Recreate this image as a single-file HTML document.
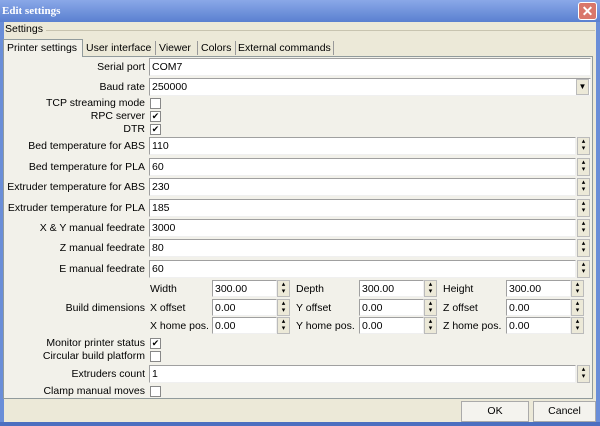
<!DOCTYPE html><html><head><style>
body{margin:0;width:600px;height:426px;overflow:hidden;background:#ece9d8;font-family:"Liberation Sans",sans-serif;font-size:10.5px;color:#000;position:relative}
div,span{position:absolute;box-sizing:border-box;white-space:nowrap}
.t{background:linear-gradient(#8aa8e8,#5a80d0);left:0;top:0;width:600px;height:22px;color:#fff;font-family:"Liberation Serif",serif;font-weight:bold;font-size:11px;padding:5px 0 0 2px}
.x{left:578px;top:2px;width:19px;height:18px;background:#d9776b;border:1px solid #fff;border-radius:3px;color:#fff;font-size:14px;text-align:center;line-height:16px;font-weight:bold}
.l{text-align:right;width:145px;left:0}
.f{background:#fff;border:1px solid #7f9db9;border-color:#a0a0a0 #f0f0f0 #f0f0f0 #a0a0a0;padding:1px 2px;height:18px;line-height:14px}
.s{width:13px;height:18px;background:#ece9d8;border:1px solid #bbb;font-size:7px;line-height:7px;text-align:center}
.c{width:11px;height:11px;background:#fff;border:1px solid #888;font-size:9px;line-height:9px;text-align:center}
.b{height:21px;border:1px solid #aaa;background:#f4f3ee;text-align:center;line-height:19px}
</style></head><body>
<div class="t">Edit settings</div><div class="x">✕</div>
<div style="left:0;top:22px;width:4px;height:404px;background:#6a8ed8"></div>
<div style="left:596px;top:22px;width:4px;height:404px;background:#6a8ed8"></div>
<div style="left:0;top:422px;width:600px;height:4px;background:#4c6fc0"></div>
<div style="left:5px;top:23px">Settings</div>
<div style="left:46px;top:30px;width:549px;height:1px;background:#c8c4b0"></div>
<div style="left:3px;top:56px;width:590px;height:343px;border:1px solid #919b9c;background:#f2f1ea"></div>
<div style="left:3px;top:39px;width:80px;height:18px;border:1px solid #919b9c;border-bottom:none;background:#f2f1ea;padding:2px 3px">Printer settings</div>
<div style="left:84px;top:41px;width:72px;padding:1px 2px;border-right:1px solid #999">User interface</div>
<div style="left:157px;top:41px;width:41px;padding:1px 2px;border-right:1px solid #999">Viewer</div>
<div style="left:199px;top:41px;width:37px;padding:1px 2px;border-right:1px solid #999">Colors</div>
<div style="left:236px;top:41px;width:98px;padding:1px 2px;border-right:1px solid #999">External commands</div>

<div class="l" style="top:61px">Serial port</div><div class="f" style="left:149px;top:58px;width:442px">COM7</div>
<div class="l" style="top:81px">Baud rate</div><div class="f" style="left:149px;top:78px;width:442px">250000</div><div class="s" style="left:576px;top:79px;height:16px;font-size:8px;line-height:14px">▼</div>
<div class="l" style="top:97px">TCP streaming mode</div><div class="c" style="left:150px;top:98px"></div>
<div class="l" style="top:110px">RPC server</div><div class="c" style="left:150px;top:111px">✔</div>
<div class="l" style="top:123px">DTR</div><div class="c" style="left:150px;top:124px">✔</div>

<div class="l" style="top:140px">Bed temperature for ABS</div><div class="f" style="left:149px;top:137px;width:427px">110</div><div class="s" style="left:577px;top:137px">▴<br>▾</div>
<div class="l" style="top:161px">Bed temperature for PLA</div><div class="f" style="left:149px;top:158px;width:427px">60</div><div class="s" style="left:577px;top:158px">▴<br>▾</div>
<div class="l" style="top:181px">Extruder temperature for ABS</div><div class="f" style="left:149px;top:178px;width:427px">230</div><div class="s" style="left:577px;top:178px">▴<br>▾</div>
<div class="l" style="top:202px">Extruder temperature for PLA</div><div class="f" style="left:149px;top:199px;width:427px">185</div><div class="s" style="left:577px;top:199px">▴<br>▾</div>
<div class="l" style="top:222px">X &amp; Y manual feedrate</div><div class="f" style="left:149px;top:219px;width:427px">3000</div><div class="s" style="left:577px;top:219px">▴<br>▾</div>
<div class="l" style="top:242px">Z manual feedrate</div><div class="f" style="left:149px;top:239px;width:427px">80</div><div class="s" style="left:577px;top:239px">▴<br>▾</div>
<div class="l" style="top:263px">E manual feedrate</div><div class="f" style="left:149px;top:260px;width:427px">60</div><div class="s" style="left:577px;top:260px">▴<br>▾</div>

<div class="l" style="top:302px">Build dimensions</div>
<div style="left:150px;top:283px">Width</div><div class="f" style="left:212px;top:280px;width:65px;height:17px">300.00</div><div class="s" style="left:277px;top:280px;height:17px">▴<br>▾</div>
<div style="left:296px;top:283px">Depth</div><div class="f" style="left:359px;top:280px;width:65px;height:17px">300.00</div><div class="s" style="left:424px;top:280px;height:17px">▴<br>▾</div>
<div style="left:443px;top:283px">Height</div><div class="f" style="left:506px;top:280px;width:65px;height:17px">300.00</div><div class="s" style="left:571px;top:280px;height:17px">▴<br>▾</div>
<div style="left:150px;top:302px">X offset</div><div class="f" style="left:212px;top:299px;width:65px;height:17px">0.00</div><div class="s" style="left:277px;top:299px;height:17px">▴<br>▾</div>
<div style="left:296px;top:302px">Y offset</div><div class="f" style="left:359px;top:299px;width:65px;height:17px">0.00</div><div class="s" style="left:424px;top:299px;height:17px">▴<br>▾</div>
<div style="left:443px;top:302px">Z offset</div><div class="f" style="left:506px;top:299px;width:65px;height:17px">0.00</div><div class="s" style="left:571px;top:299px;height:17px">▴<br>▾</div>
<div style="left:150px;top:320px">X home pos.</div><div class="f" style="left:212px;top:317px;width:65px;height:17px">0.00</div><div class="s" style="left:277px;top:317px;height:17px">▴<br>▾</div>
<div style="left:296px;top:320px">Y home pos.</div><div class="f" style="left:359px;top:317px;width:65px;height:17px">0.00</div><div class="s" style="left:424px;top:317px;height:17px">▴<br>▾</div>
<div style="left:443px;top:320px">Z home pos.</div><div class="f" style="left:506px;top:317px;width:65px;height:17px">0.00</div><div class="s" style="left:571px;top:317px;height:17px">▴<br>▾</div>

<div class="l" style="top:337px">Monitor printer status</div><div class="c" style="left:150px;top:338px">✔</div>
<div class="l" style="top:350px">Circular build platform</div><div class="c" style="left:150px;top:351px"></div>
<div class="l" style="top:368px">Extruders count</div><div class="f" style="left:149px;top:365px;width:427px">1</div><div class="s" style="left:577px;top:365px">▴<br>▾</div>
<div class="l" style="top:385px">Clamp manual moves</div><div class="c" style="left:150px;top:386px"></div>

<div class="b" style="left:461px;top:401px;width:68px">OK</div>
<div class="b" style="left:533px;top:401px;width:63px">Cancel</div>
</body></html>
